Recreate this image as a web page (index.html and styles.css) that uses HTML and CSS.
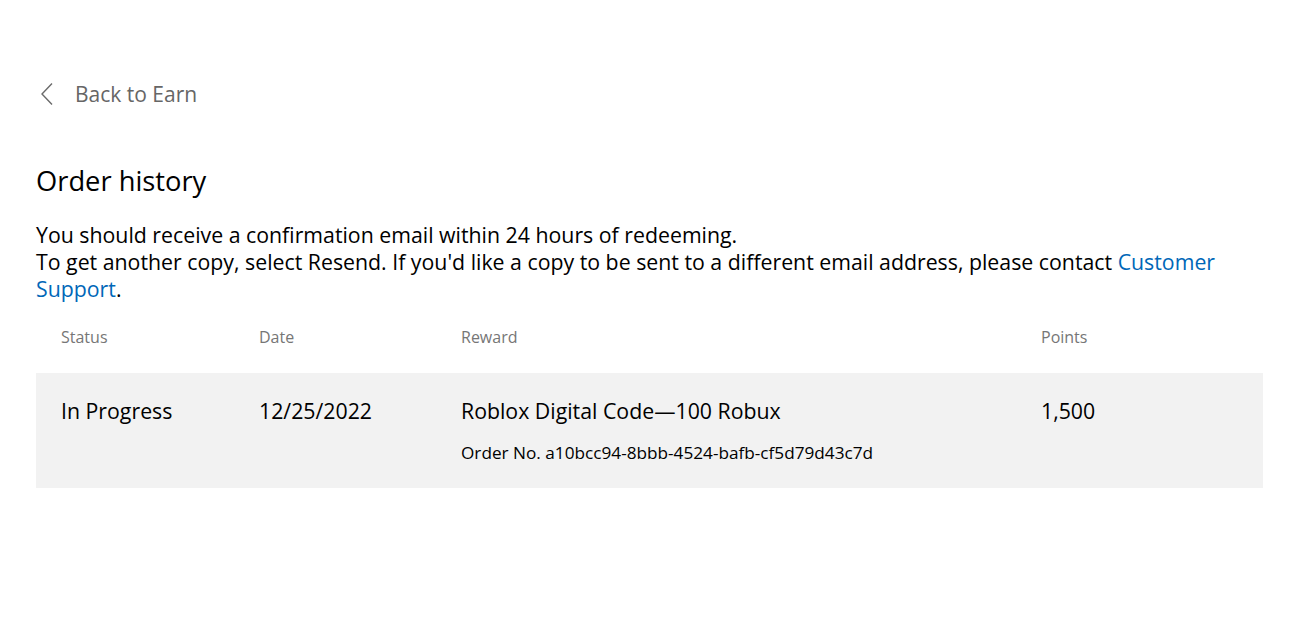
FILE: index.html
```html
<!DOCTYPE html>
<html lang="en">
<head>
<meta charset="utf-8">
<title>Order history</title>
<link rel="stylesheet" href="styles.css">
</head>
<body>
<main class="page">
  <a class="back" href="#">
    <svg class="back-icon" width="16" height="24" viewBox="0 0 16 24" aria-hidden="true"><path d="M13 1.5 L3 12 L13 22.5" fill="none" stroke="#6b6b6b" stroke-width="1.4"/></svg>
    <span class="back-text">Back to Earn</span>
  </a>
  <h1 class="title">Order history</h1>
  <p class="intro">You should receive a confirmation email within 24 hours of redeeming.<br>To get another copy, select Resend. If you'd like a copy to be sent to a different email address, please contact <a class="link" href="#">Customer Support</a>.</p>
  <div class="table">
    <div class="row head">
      <div class="cell c1">Status</div>
      <div class="cell c2">Date</div>
      <div class="cell c3">Reward</div>
      <div class="cell c4">Points</div>
    </div>
    <div class="row item">
      <div class="cell c1">In Progress</div>
      <div class="cell c2">12/25/2022</div>
      <div class="cell c3">
        <div class="reward">Roblox Digital Code—100 Robux</div>
        <div class="order">Order No. a10bcc94-8bbb-4524-bafb-cf5d79d43c7d</div>
      </div>
      <div class="cell c4">1,500</div>
    </div>
  </div>
</main>
</body>
</html>
```

FILE: styles.css
```css
html, body {
  margin: 0;
  padding: 0;
  background: #fff;
}
body {
  font-family: "Open Sans", "Noto Sans", "Liberation Sans", sans-serif;
  color: #000;
}
.page {
  padding: 80px 47px 0 36px;
}
.back {
  display: flex;
  align-items: center;
  gap: 20px;
  text-decoration: none;
  color: #666;
  font-size: 21px;
  height: 28px;
  padding-left: 3px;
}
.back-icon { display: block; }
.title {
  margin: 54px 0 0;
  font-size: 27.3px;
  font-weight: 400;
  line-height: 38px;
}
.intro {
  margin: 21px 0 0;
  font-size: 21.3px;
  line-height: 27px;
}
.link {
  color: #0067b8;
  text-decoration: none;
}
.table {
  margin-top: 24px;
}
.row {
  display: grid;
  grid-template-columns: 198px 202px 580px 1fr;
  padding-left: 25px;
}
.head {
  color: #767676;
  font-size: 16px;
  line-height: 22px;
  height: 47px;
}
.item {
  background: #f2f2f2;
  padding-top: 24px;
  padding-bottom: 24px;
  font-size: 21.3px;
  line-height: 28px;
}
.order {
  font-size: 17.2px;
  line-height: 22px;
  margin-top: 17px;
}
```
